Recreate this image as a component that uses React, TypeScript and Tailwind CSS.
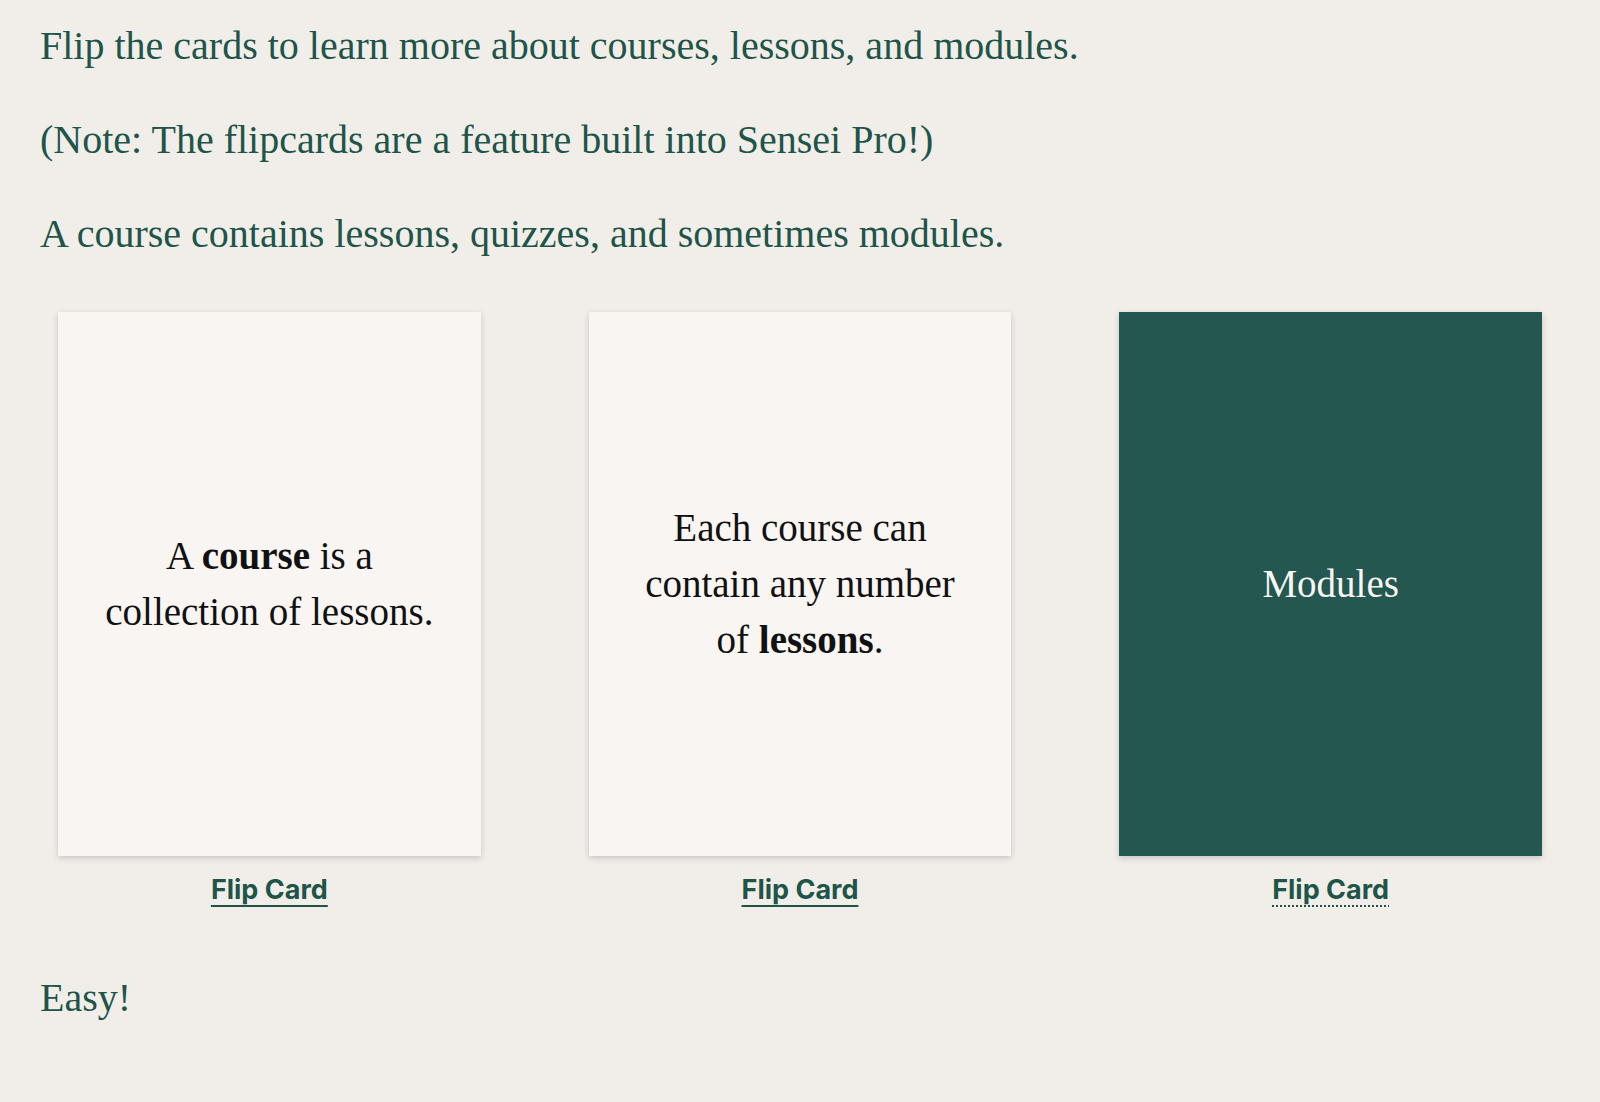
import type { ReactNode } from 'react'

const serif = "font-['Liberation_Serif','Times_New_Roman',serif]"

type Card = {
  face: ReactNode
  dark?: boolean
  dotted?: boolean
}

const cards: Card[] = [
  {
    face: (
      <>
        A <strong className="font-bold">course</strong> is a
        <br />
        collection of lessons.
      </>
    ),
  },
  {
    face: (
      <>
        Each course can
        <br />
        contain any number
        <br />
        of <strong className="font-bold">lessons</strong>.
      </>
    ),
  },
  { face: 'Modules', dark: true, dotted: true },
]

function FlipCard({ card }: { card: Card }) {
  return (
    <div className="flex flex-col items-center">
      <div
        className={
          card.dark
            ? 'flex h-[544px] w-full items-center justify-center bg-[#235750] px-10 text-center text-[39px] leading-[56px] text-[#f8f5f2] shadow-[0_2px_6px_rgba(0,0,0,0.18)]'
            : 'flex h-[544px] w-full items-center justify-center bg-[#f8f5f2] px-10 text-center text-[39px] leading-[56px] text-[#111] shadow-[0_2px_6px_rgba(0,0,0,0.18)]'
        }
      >
        <p>{card.face}</p>
      </div>
      <a
        href="#"
        className={
          card.dotted
            ? "mt-[18px] font-['Inter',sans-serif] text-[27px] font-bold leading-[32px] text-[#1e5548] underline decoration-dotted decoration-[2px] underline-offset-[6px]"
            : "mt-[18px] font-['Inter',sans-serif] text-[27px] font-bold leading-[32px] text-[#1e5548] underline decoration-[2px] underline-offset-[6px]"
        }
      >
        Flip Card
      </a>
    </div>
  )
}

export default function App() {
  return (
    <div className={`min-h-screen bg-[#f1eeea] px-10 pt-[18px] ${serif}`}>
      <div className="space-y-[38px] text-[40px] leading-[56px] text-[#1e5548]">
        <p>Flip the cards to learn more about courses, lessons, and modules.</p>
        <p>(Note: The flipcards are a feature built into Sensei Pro!)</p>
        <p>A course contains lessons, quizzes, and sometimes modules.</p>
      </div>

      <div className="mt-[50px] grid grid-cols-3 gap-[108px] px-[18px]">
        {cards.map((card, i) => (
          <FlipCard key={i} card={card} />
        ))}
      </div>

      <p className="mt-[64px] text-[40px] leading-[56px] text-[#1e5548]">Easy!</p>
    </div>
  )
}
